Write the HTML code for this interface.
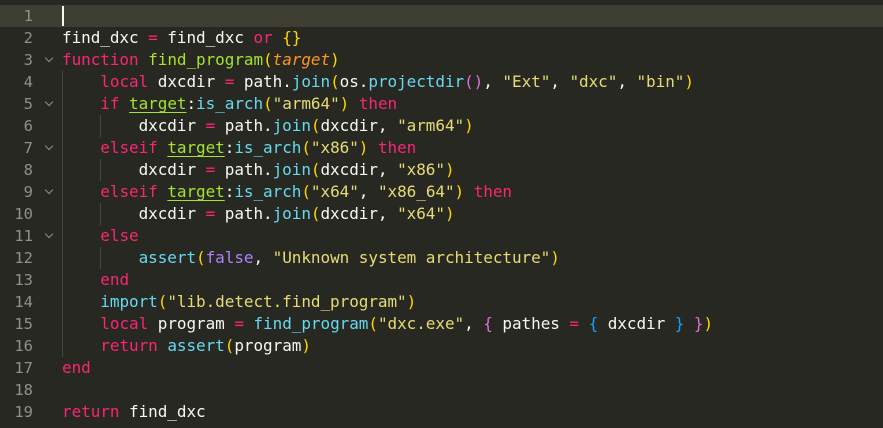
<!DOCTYPE html>
<html><head><meta charset="utf-8"><style>
body{margin:0;width:883px;height:428px;background:#272822;overflow:hidden;position:relative;font-family:"DejaVu Sans Mono","Liberation Mono",monospace;font-size:16px;color:#f8f8f2}
.l{position:absolute;left:0;height:22px;line-height:22px;width:883px;white-space:pre}
.n{position:absolute;left:0;width:33px;text-align:right;color:#90908a;font-size:15.5px}
.c{position:absolute;left:62px;letter-spacing:-0.06px}
.f{position:absolute;left:46px;top:6px;width:5px;height:5px;border-right:1.3px solid #90908a;border-bottom:1.3px solid #90908a;transform:rotate(45deg)}
.k{color:#f92672}.g{color:#a6e22e}.b{color:#66d9ef}.s{color:#e6db74}.o{color:#fd971f;font-style:italic}.p{color:#ae81ff}
.y{color:#ffd700}.m{color:#da70d6}.u{color:#179fff}
.t{color:#a6e22e;text-decoration:underline;text-underline-offset:3px}
.ig{position:absolute;width:1px;background:#464741}
</style></head><body>
<div style="position:absolute;left:0;top:5px;width:883px;height:22px;background:#3e3d32"></div>
<div style="position:absolute;left:62px;top:6px;width:2px;height:20px;background:#f8f8f0"></div>
<div class="ig" style="left:62px;top:71px;height:286px"></div>
<div class="ig" style="left:100px;top:115px;height:22px"></div>
<div class="ig" style="left:100px;top:159px;height:22px"></div>
<div class="ig" style="left:100px;top:203px;height:22px"></div>
<div class="ig" style="left:100px;top:247px;height:22px"></div>
<div class="l" style="top:5px"><span class="n">1</span></div>
<div class="l" style="top:27px"><span class="n">2</span><span class="c">find_dxc <span class="k">=</span> find_dxc <span class="k">or</span> <span class="y">{}</span></span></div>
<div class="l" style="top:49px"><span class="n">3</span><span class="f"></span><span class="c"><span class="k">function</span> <span class="g">find_program</span><span class="y">(</span><span class="o">target</span><span class="y">)</span></span></div>
<div class="l" style="top:71px"><span class="n">4</span><span class="c">    <span class="k">local</span> dxcdir <span class="k">=</span> path.<span class="b">join</span><span class="y">(</span>os.<span class="b">projectdir</span><span class="m">()</span>, <span class="s">"Ext"</span>, <span class="s">"dxc"</span>, <span class="s">"bin"</span><span class="y">)</span></span></div>
<div class="l" style="top:93px"><span class="n">5</span><span class="f"></span><span class="c">    <span class="k">if</span> <span class="t">target</span>:<span class="b">is_arch</span><span class="y">(</span><span class="s">"arm64"</span><span class="y">)</span> <span class="k">then</span></span></div>
<div class="l" style="top:115px"><span class="n">6</span><span class="c">        dxcdir <span class="k">=</span> path.<span class="b">join</span><span class="y">(</span>dxcdir, <span class="s">"arm64"</span><span class="y">)</span></span></div>
<div class="l" style="top:137px"><span class="n">7</span><span class="f"></span><span class="c">    <span class="k">elseif</span> <span class="t">target</span>:<span class="b">is_arch</span><span class="y">(</span><span class="s">"x86"</span><span class="y">)</span> <span class="k">then</span></span></div>
<div class="l" style="top:159px"><span class="n">8</span><span class="c">        dxcdir <span class="k">=</span> path.<span class="b">join</span><span class="y">(</span>dxcdir, <span class="s">"x86"</span><span class="y">)</span></span></div>
<div class="l" style="top:181px"><span class="n">9</span><span class="f"></span><span class="c">    <span class="k">elseif</span> <span class="t">target</span>:<span class="b">is_arch</span><span class="y">(</span><span class="s">"x64"</span>, <span class="s">"x86_64"</span><span class="y">)</span> <span class="k">then</span></span></div>
<div class="l" style="top:203px"><span class="n">10</span><span class="c">        dxcdir <span class="k">=</span> path.<span class="b">join</span><span class="y">(</span>dxcdir, <span class="s">"x64"</span><span class="y">)</span></span></div>
<div class="l" style="top:225px"><span class="n">11</span><span class="f"></span><span class="c">    <span class="k">else</span></span></div>
<div class="l" style="top:247px"><span class="n">12</span><span class="c">        <span class="b">assert</span><span class="y">(</span><span class="p">false</span>, <span class="s">"Unknown system architecture"</span><span class="y">)</span></span></div>
<div class="l" style="top:269px"><span class="n">13</span><span class="c">    <span class="k">end</span></span></div>
<div class="l" style="top:291px"><span class="n">14</span><span class="c">    <span class="b">import</span><span class="y">(</span><span class="s">"lib.detect.find_program"</span><span class="y">)</span></span></div>
<div class="l" style="top:313px"><span class="n">15</span><span class="c">    <span class="k">local</span> program <span class="k">=</span> <span class="b">find_program</span><span class="y">(</span><span class="s">"dxc.exe"</span>, <span class="m">{</span> pathes <span class="k">=</span> <span class="u">{</span> dxcdir <span class="u">}</span> <span class="m">}</span><span class="y">)</span></span></div>
<div class="l" style="top:335px"><span class="n">16</span><span class="c">    <span class="k">return</span> <span class="b">assert</span><span class="y">(</span>program<span class="y">)</span></span></div>
<div class="l" style="top:357px"><span class="n">17</span><span class="c"><span class="k">end</span></span></div>
<div class="l" style="top:379px"><span class="n">18</span></div>
<div class="l" style="top:401px"><span class="n">19</span><span class="c"><span class="k">return</span> find_dxc</span></div>
</body></html>
